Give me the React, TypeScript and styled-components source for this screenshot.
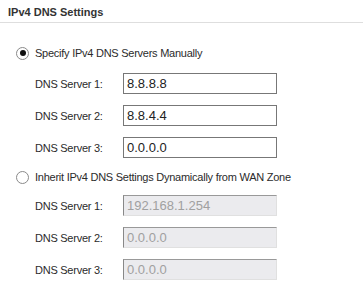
import styled, { createGlobalStyle } from 'styled-components';

const Global = createGlobalStyle`
    body {
        margin: 0;
        background: #ffffff;
        font-family: "Liberation Sans", Arial, sans-serif;
        color: #2b2b2b;
    }
`

type Server = { label: string, value: string }

const manual: Server[] = [
    { label: 'DNS Server 1:', value: '8.8.8.8' },
    { label: 'DNS Server 2:', value: '8.8.4.4' },
    { label: 'DNS Server 3:', value: '0.0.0.0' },
]

const inherited: Server[] = [
    { label: 'DNS Server 1:', value: '192.168.1.254' },
    { label: 'DNS Server 2:', value: '0.0.0.0' },
    { label: 'DNS Server 3:', value: '0.0.0.0' },
]

const App = (): JSX.Element => {
    return (
        <Panel>
            <Global />
            <Title>IPv4 DNS Settings</Title>
            <Body>
                <Group>
                    <Choice $below={2}>
                        <Radio checked />
                        <span>Specify IPv4 DNS Servers Manually</span>
                    </Choice>
                    {manual.map(s => (
                        <Row key={s.label}>
                            <Label>{s.label}</Label>
                            <Field disabled={false}>{s.value}</Field>
                        </Row>
                    ))}
                </Group>
                <Group>
                    <Choice $below={0}>
                        <Radio checked={false} />
                        <span>Inherit IPv4 DNS Settings Dynamically from WAN Zone</span>
                    </Choice>
                    {inherited.map(s => (
                        <Row key={s.label}>
                            <Label>{s.label}</Label>
                            <Field disabled>{s.value}</Field>
                        </Row>
                    ))}
                </Group>
            </Body>
        </Panel>
    )
}

export default App

const Panel = styled.div`
    width: 363px;
    height: 301px;
    overflow: hidden;
`
const Title = styled.div`
    padding: 6px 0 4px 8px;
    height: 12px;
    line-height: 12px;
    font-size: 11px;
    font-weight: bold;
    color: #333;
    border-bottom: 1px solid #dedede;
`
const Body = styled.div`
    padding: 23px 0 0 16px;
    display: flex;
    flex-direction: column;
    gap: 12px;
`
const Group = styled.div`
    display: flex;
    flex-direction: column;
    gap: 11px;
`
const Choice = styled.div<{ $below: number }>`
    display: flex;
    align-items: center;
    gap: 6px;
    font-size: 11px;
    letter-spacing: -0.25px;
    height: 14px;
    margin-bottom: ${p => p.$below}px;
`
const Radio = styled.span<{ checked: boolean }>`
    width: 11px;
    height: 11px;
    border-radius: 50%;
    border: 1px solid #8a8a8a;
    background: #fff;
    display: flex;
    align-items: center;
    justify-content: center;
    &::after {
        content: '';
        width: 6px;
        height: 6px;
        border-radius: 50%;
        background: ${p => (p.checked ? '#111' : 'transparent')};
    }
`
const Row = styled.div`
    display: flex;
    align-items: center;
    height: 21px;
    padding-left: 19px;
`
const Label = styled.div`
    width: 88px;
    font-size: 11px;
    letter-spacing: -0.25px;
`
const Field = styled.div<{ disabled: boolean }>`
    box-sizing: border-box;
    width: 154px;
    height: 21px;
    padding: 0 3px;
    display: flex;
    align-items: center;
    font-size: 13px;
    border: 1px solid ${p => (p.disabled ? '#e0e0e0' : '#777')};
    border-left-color: ${p => (p.disabled ? '#888' : '#777')};
    border-top-color: ${p => (p.disabled ? '#999' : '#777')};
    background: ${p => (p.disabled ? '#ebebee' : '#fff')};
    color: ${p => (p.disabled ? '#a0a0a0' : '#222')};
`
